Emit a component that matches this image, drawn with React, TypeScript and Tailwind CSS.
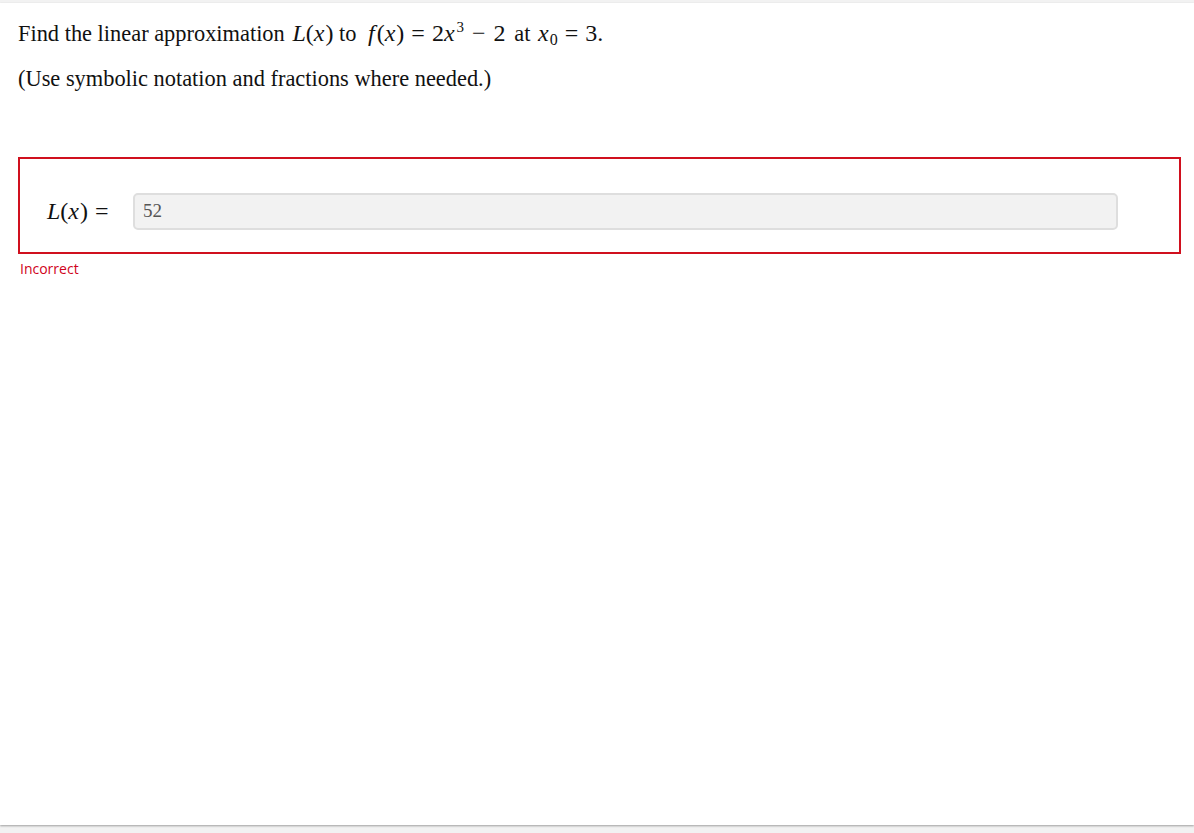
const serif = { fontFamily: '"Liberation Serif", "Times New Roman", serif' };

function Rel({ children }: { children: React.ReactNode }) {
  return <span className="inline-block mx-[7px]">{children}</span>;
}

function Bin({ children }: { children: React.ReactNode }) {
  return <span className="inline-block mx-[8px]">{children}</span>;
}

export default function App() {
  return (
    <div className="min-h-[833px] bg-[#f2f2f2] pt-[3px]">
      <div className="min-h-[822px] bg-white shadow-[0_1px_2px_rgba(0,0,0,0.35)] pl-[18px] pr-[13px] pt-[16px]">
        <p className="text-[22.4px] leading-[28px] text-[#111] whitespace-nowrap" style={serif}>
          Find the linear approximation{' '}
          <span className="text-[24px] ml-[2px]">
            <i>L</i>(<i className="pr-[1px]">x</i>)
          </span>{' '}
          to{' '}
          <span className="text-[24px] ml-[6px]">
            <i className="pr-[2px]">f</i>(<i className="pr-[1px]">x</i>)<Rel>=</Rel>2<i>x</i>
            <sup className="text-[15px] -top-[0.6em] ml-[2px]">3</sup>
            <Bin>−</Bin>2
          </span>{' '}
          <span className="ml-[3px]">at</span>{' '}
          <span className="text-[24px] ml-[2px]">
            <i>x</i>
            <sub className="text-[16px] ml-[1px]">0</sub>
            <Rel>=</Rel>3.
          </span>
        </p>
        <p className="mt-[17px] text-[22.4px] leading-[28px] text-[#111]" style={serif}>
          (Use symbolic notation and fractions where needed.)
        </p>
        <div className="mt-[64px] border-2 border-[#d0101e] h-[97px] flex items-start pt-[34px] pl-[27px] pr-[61px]">
          <span className="text-[24px] leading-[37px] text-[#111] w-[86px] shrink-0 whitespace-nowrap" style={serif}>
            <i>L</i>(<i className="pr-[1px]">x</i>)<Rel>=</Rel>
          </span>
          <div
            className="flex-1 h-[37px] rounded-[5px] border-2 border-[#dedede] bg-[#f2f2f2] flex items-center px-[8px] text-[19px] text-[#555]"
            style={serif}
          >
            52
          </div>
        </div>
        <div className="mt-[4px] pl-[2px] text-[14px] text-[#d0021b]" style={{ fontFamily: '"Open Sans", sans-serif' }}>
          Incorrect
        </div>
      </div>
    </div>
  );
}
